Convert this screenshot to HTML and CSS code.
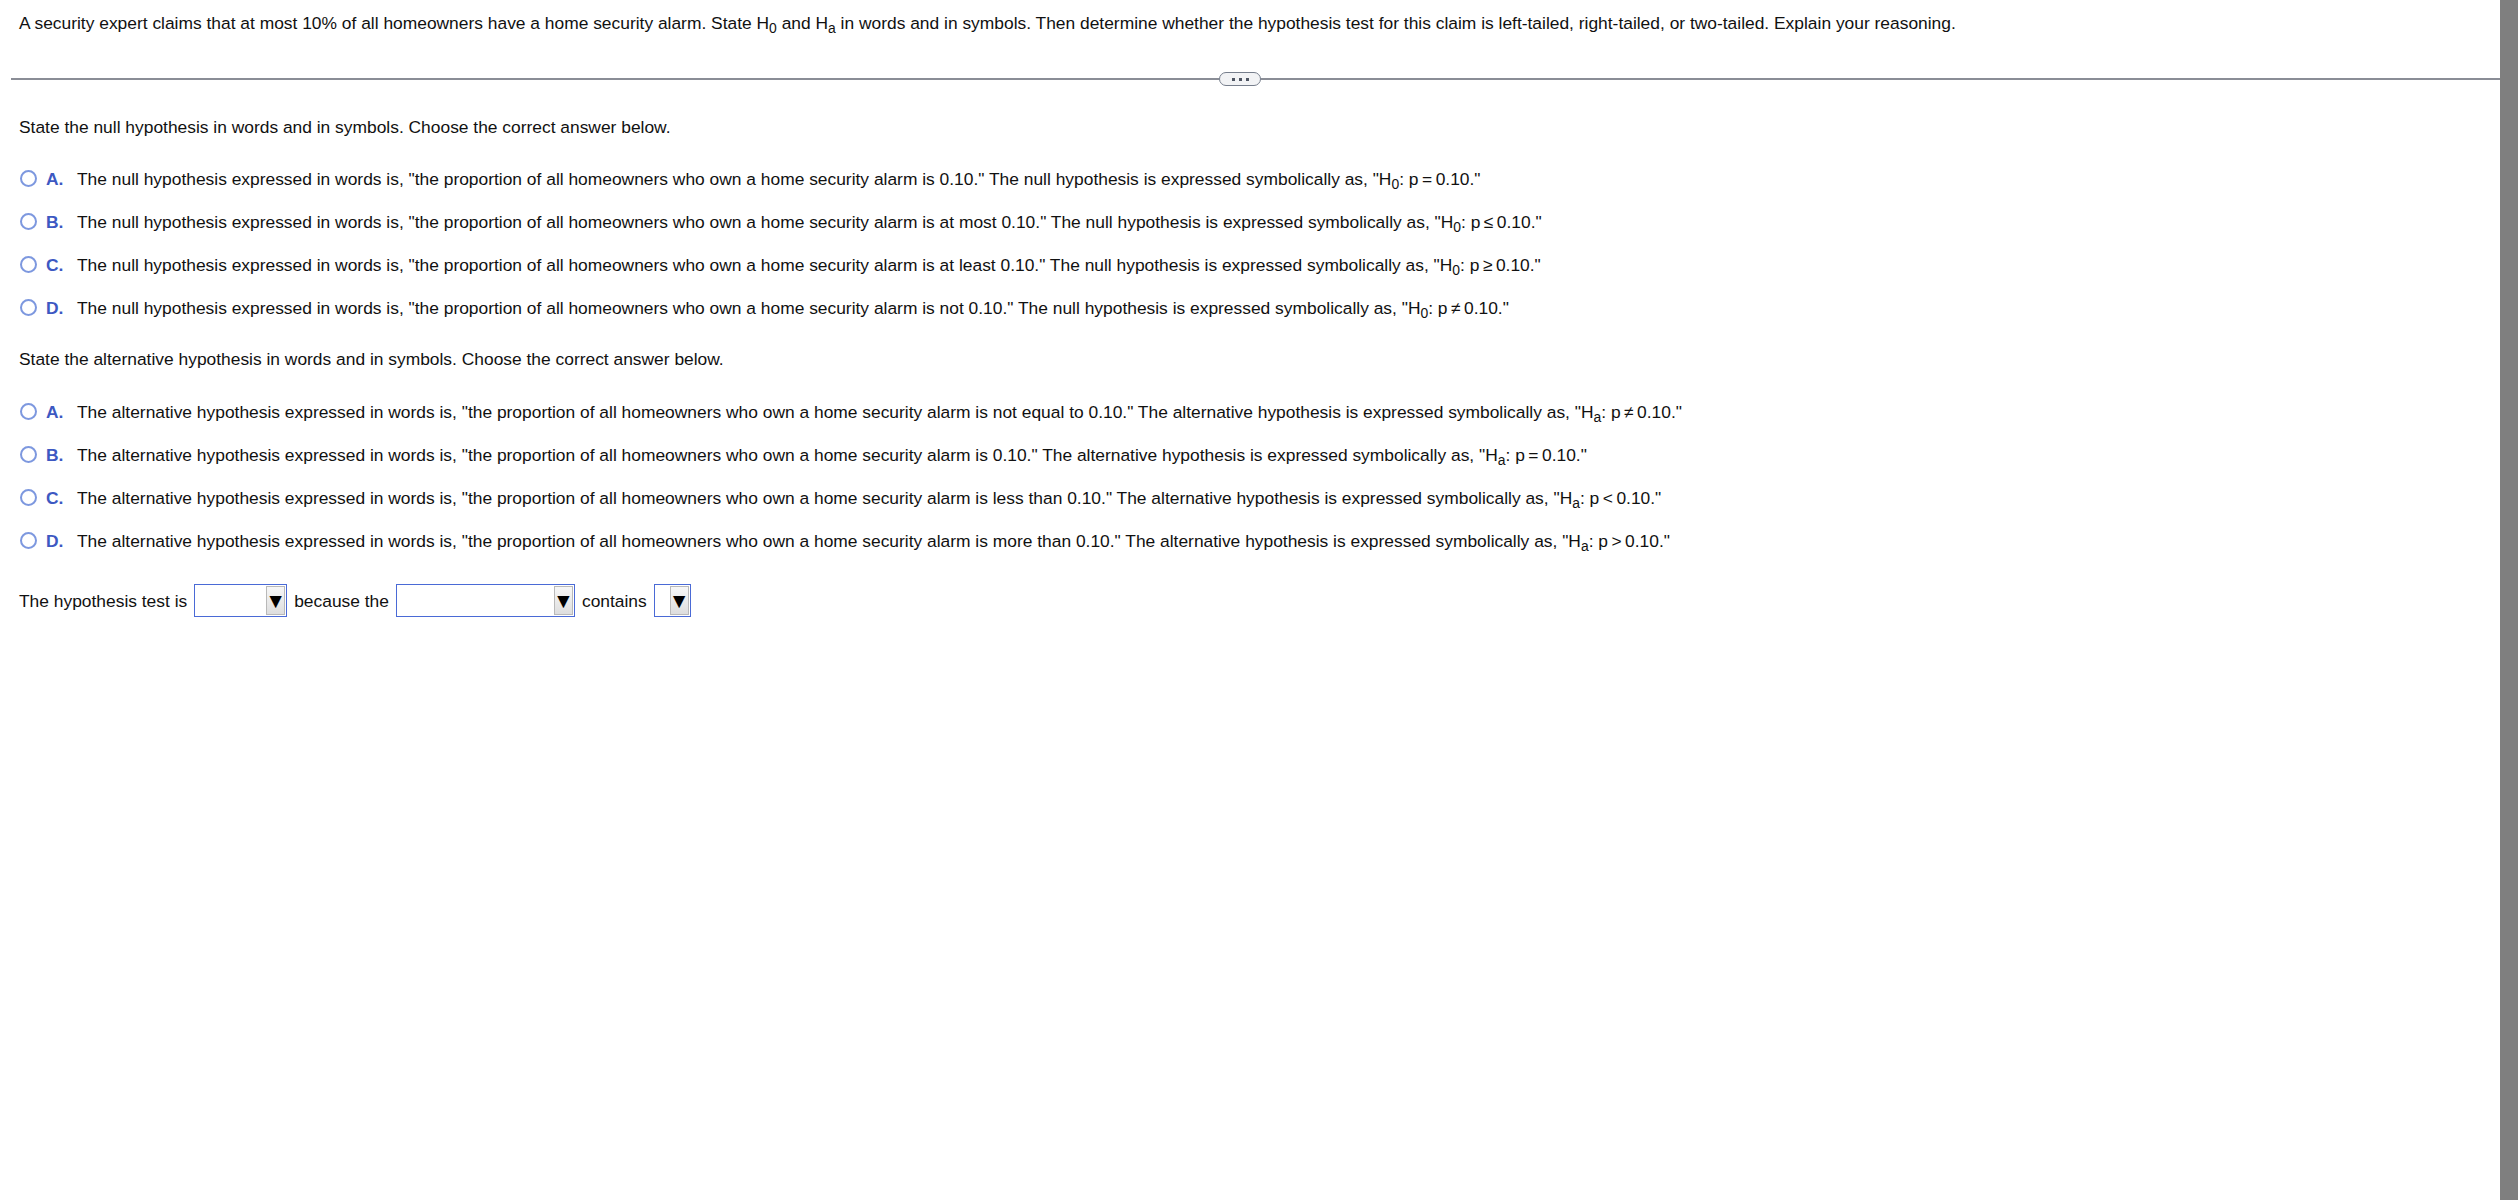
FILE: index.html
```html
<!DOCTYPE html>
<html>
<head>
<meta charset="utf-8">
<title>Hypothesis test</title>
<link rel="stylesheet" href="styles.css">
</head>
<body>
<div class="page">
  <main class="content">
    <p class="question">A security expert claims that at most 10% of all homeowners have a home security alarm. State H<sub>0</sub> and H<sub>a</sub> in words and in symbols. Then determine whether the hypothesis test for this claim is left-tailed, right-tailed, or two-tailed. Explain your reasoning.</p>

    <div class="divider">
      <span class="line line-left"></span>
      <span class="pill"><i></i><i></i><i></i></span>
      <span class="line line-right"></span>
    </div>

    <p class="heading first">State the null hypothesis in words and in symbols. Choose the correct answer below.</p>
    <ul class="options">
      <li class="option"><span class="radio"></span><span class="letter">A.</span><span class="text">The null hypothesis expressed in words is, "the proportion of all homeowners who own a home security alarm is 0.10." The null hypothesis is expressed symbolically as, "H<sub>0</sub>: p&thinsp;=&thinsp;0.10."</span></li>
      <li class="option"><span class="radio"></span><span class="letter">B.</span><span class="text">The null hypothesis expressed in words is, "the proportion of all homeowners who own a home security alarm is at most 0.10." The null hypothesis is expressed symbolically as, "H<sub>0</sub>: p&thinsp;≤&thinsp;0.10."</span></li>
      <li class="option"><span class="radio"></span><span class="letter">C.</span><span class="text">The null hypothesis expressed in words is, "the proportion of all homeowners who own a home security alarm is at least 0.10." The null hypothesis is expressed symbolically as, "H<sub>0</sub>: p&thinsp;≥&thinsp;0.10."</span></li>
      <li class="option"><span class="radio"></span><span class="letter">D.</span><span class="text">The null hypothesis expressed in words is, "the proportion of all homeowners who own a home security alarm is not 0.10." The null hypothesis is expressed symbolically as, "H<sub>0</sub>: p&thinsp;≠&thinsp;0.10."</span></li>
    </ul>

    <p class="heading">State the alternative hypothesis in words and in symbols. Choose the correct answer below.</p>
    <ul class="options alt">
      <li class="option"><span class="radio"></span><span class="letter">A.</span><span class="text">The alternative hypothesis expressed in words is, "the proportion of all homeowners who own a home security alarm is not equal to 0.10." The alternative hypothesis is expressed symbolically as, "H<sub>a</sub>: p&thinsp;≠&thinsp;0.10."</span></li>
      <li class="option"><span class="radio"></span><span class="letter">B.</span><span class="text">The alternative hypothesis expressed in words is, "the proportion of all homeowners who own a home security alarm is 0.10." The alternative hypothesis is expressed symbolically as, "H<sub>a</sub>: p&thinsp;=&thinsp;0.10."</span></li>
      <li class="option"><span class="radio"></span><span class="letter">C.</span><span class="text">The alternative hypothesis expressed in words is, "the proportion of all homeowners who own a home security alarm is less than 0.10." The alternative hypothesis is expressed symbolically as, "H<sub>a</sub>: p&thinsp;&lt;&thinsp;0.10."</span></li>
      <li class="option"><span class="radio"></span><span class="letter">D.</span><span class="text">The alternative hypothesis expressed in words is, "the proportion of all homeowners who own a home security alarm is more than 0.10." The alternative hypothesis is expressed symbolically as, "H<sub>a</sub>: p&thinsp;&gt;&thinsp;0.10."</span></li>
    </ul>

    <div class="answer-row">
      <span>The hypothesis test is</span>
      <span class="select w1"><span class="arrow">&#9660;</span></span>
      <span>because the</span>
      <span class="select w2"><span class="arrow">&#9660;</span></span>
      <span>contains</span>
      <span class="select w3"><span class="arrow">&#9660;</span></span>
    </div>
  </main>
  <div class="scrollbar"></div>
</div>
</body>
</html>
```

FILE: styles.css
```css
html, body {
  margin: 0;
  padding: 0;
  background: #ffffff;
}

body {
  font-family: "Liberation Sans", Arial, Helvetica, sans-serif;
  font-size: 17.4px;
  color: #111111;
}

.page {
  display: flex;
  height: 100vh;
  overflow: hidden;
}

.content {
  flex: 1;
  min-width: 0;
}

.scrollbar {
  width: 18px;
  flex: none;
  background: #7f7f7f;
}

p {
  margin: 0;
}

sub {
  font-size: 0.8em;
  vertical-align: -0.3em;
  line-height: 0;
}

.question {
  padding: 13px 0 0 19px;
  line-height: 20px;
}

.divider {
  display: flex;
  align-items: center;
  margin: 39px 0 0 11px;
  height: 14px;
}

.line {
  height: 2px;
  background: #8a8d96;
}

.line-left {
  width: 1208px;
}

.line-right {
  flex: 1;
}

.pill {
  display: flex;
  align-items: center;
  justify-content: center;
  gap: 4px;
  width: 40px;
  height: 12px;
  border: 1.5px solid #767e8c;
  border-radius: 8px;
  background: #f2f3f5;
}

.pill i {
  display: block;
  width: 3px;
  height: 3px;
  background: #4e5562;
}

.heading {
  padding-left: 19px;
  line-height: 20px;
}

.heading.first {
  margin-top: 31px;
}

.options {
  list-style: none;
  margin: 20px 0 0 0;
  padding: 0 0 0 20px;
}

.options.alt {
  margin-top: 21px;
}

.option {
  display: flex;
  align-items: center;
  height: 43px;
  line-height: 20px;
}

.radio {
  width: 13px;
  height: 13px;
  border: 2px solid #7d98df;
  border-radius: 50%;
  flex: none;
  box-sizing: content-box;
}

.letter {
  width: 31px;
  margin-left: 9px;
  font-weight: bold;
  color: #3d58c2;
  flex: none;
}

.options + .heading {
  margin-top: 20px;
}

.answer-row {
  display: flex;
  align-items: center;
  gap: 7px;
  margin: 22px 0 0 19px;
  line-height: 20px;
}

.select {
  display: flex;
  justify-content: flex-end;
  align-items: center;
  height: 33px;
  border: 1px solid #4a6ad6;
  box-sizing: border-box;
  background: #ffffff;
  padding-right: 1px;
}

.select.w1 { width: 93px; }
.select.w2 { width: 179px; }
.select.w3 { width: 37px; }

.arrow {
  display: flex;
  align-items: center;
  justify-content: center;
  width: 19px;
  height: 29px;
  box-sizing: border-box;
  border: 1px solid #b9b9b9;
  background: linear-gradient(#f7f7f7, #dedede);
  font-size: 21px;
  line-height: 1;
  color: #000000;
}
```
